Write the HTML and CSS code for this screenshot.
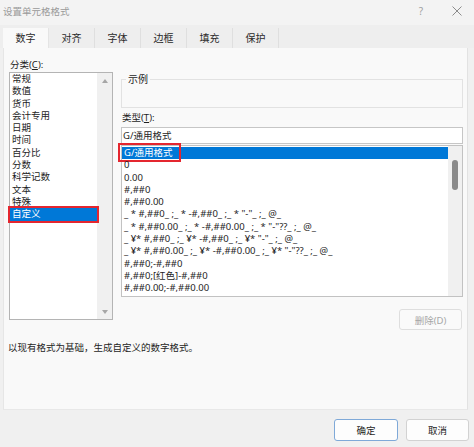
FILE: index.html
```html
<!DOCTYPE html>
<html lang="zh-CN">
<head>
<meta charset="utf-8">
<title>设置单元格格式</title>
<link rel="stylesheet" href="styles.css">
</head>
<body>
<div class="dialog">
  <div class="titlebar">
    <span class="title">设置单元格格式</span>
    <div class="title-btns">
      <span class="help">?</span>
      <svg class="close" width="10" height="10" viewBox="0 0 10 10"><path d="M0.5 0.5 L9.5 9.5 M9.5 0.5 L0.5 9.5" stroke="#8c8c8c" stroke-width="1" fill="none"/></svg>
    </div>
  </div>
  <div class="tabs">
    <div class="tab active">数字</div>
    <div class="tab">对齐</div>
    <div class="tab">字体</div>
    <div class="tab">边框</div>
    <div class="tab">填充</div>
    <div class="tab">保护</div>
  </div>
  <div class="panel">
    <div class="main">
      <div class="cat-col">
        <div class="label">分类(<u>C</u>):</div>
        <div class="listbox cat-list">
          <div class="items">
            <div class="item">常规</div>
            <div class="item">数值</div>
            <div class="item">货币</div>
            <div class="item">会计专用</div>
            <div class="item">日期</div>
            <div class="item">时间</div>
            <div class="item">百分比</div>
            <div class="item">分数</div>
            <div class="item">科学记数</div>
            <div class="item">文本</div>
            <div class="item">特殊</div>
            <div class="item selected marked">自定义</div>
          </div>
          <div class="vscroll arrows">
            <span class="arrow up"></span>
            <span class="arrow down"></span>
          </div>
        </div>
      </div>
      <div class="type-col">
        <fieldset class="sample"><legend>示例</legend></fieldset>
        <div class="label type-label">类型(<u>T</u>):</div>
        <div class="input">G/通用格式</div>
        <div class="listbox type-list">
          <div class="items">
            <div class="item selected"><span class="mark">G/通用格式</span></div>
            <div class="item">0</div>
            <div class="item">0.00</div>
            <div class="item">#,##0</div>
            <div class="item">#,##0.00</div>
            <div class="item">_ * #,##0_ ;_ * -#,##0_ ;_ * "-"_ ;_ @_</div>
            <div class="item">_ * #,##0.00_ ;_ * -#,##0.00_ ;_ * "-"??_ ;_ @_</div>
            <div class="item">_ ¥* #,##0_ ;_ ¥* -#,##0_ ;_ ¥* "-"_ ;_ @_</div>
            <div class="item">_ ¥* #,##0.00_ ;_ ¥* -#,##0.00_ ;_ ¥* "-"??_ ;_ @_</div>
            <div class="item">#,##0;-#,##0</div>
            <div class="item">#,##0;[红色]-#,##0</div>
            <div class="item">#,##0.00;-#,##0.00</div>
          </div>
          <div class="vscroll"><span class="thumb"></span></div>
        </div>
        <div class="del-row"><button class="btn disabled">删除(D)</button></div>
      </div>
    </div>
    <p class="desc">以现有格式为基础，生成自定义的数字格式。</p>
  </div>
  <div class="footer">
    <button class="btn default">确定</button>
    <button class="btn">取消</button>
  </div>
</div>
</body>
</html>
```
FILE: styles.css
```css
html, body {
  margin: 0;
  padding: 0;
}
body {
  width: 474px;
  height: 447px;
  overflow: hidden;
  background: #f0f0f0;
  font-family: "Noto Sans", "Noto Sans CJK SC", sans-serif;
  font-size: 9.5px;
  color: #1e1e1e;
}
.dialog {
  width: 474px;
  height: 447px;
  display: flex;
  flex-direction: column;
}
.titlebar {
  height: 25px;
  background: #f3f3f3;
  display: flex;
  align-items: center;
  justify-content: space-between;
  padding: 0 12px 4px 3px;
  box-sizing: border-box;
}
.title {
  color: #9a9a9a;
  font-size: 9.5px;
}
.title-btns {
  display: flex;
  align-items: center;
  gap: 29px;
}
.help {
  color: #a0a0a0;
  font-size: 10px;
}
.close {
  display: block;
}
.tabs {
  height: 23px;
  background: #eeeeee;
  display: flex;
  align-items: flex-end;
  padding-left: 3px;
}
.tab {
  width: 46px;
  height: 20px;
  line-height: 20px;
  text-align: center;
  font-size: 10px;
  color: #2a2a2a;
  border-right: 1px solid #dfdfdf;
  box-sizing: border-box;
}
.tab.active {
  background: #f9f9f9;
  border-right: 1px solid #e4e4e4;
}
.panel {
  margin-left: 3px;
  width: 465px;
  height: 362px;
  background: #f9f9f9;
  border-left: 1px solid #e6e6e6;
  border-right: 1px solid #e2e2e2;
  border-bottom: 1px solid #e8e8e8;
  box-sizing: border-box;
  padding: 9px 4px 0 5px;
}
.main {
  display: flex;
  gap: 8px;
  align-items: flex-start;
}
.cat-col {
  width: 104px;
  flex: none;
}
.label {
  line-height: 15px;
  height: 15px;
  padding-left: 1px;
}
.listbox {
  display: flex;
  background: #fff;
  border: 1px solid #b4b4b4;
  box-sizing: border-box;
}
.cat-list {
  height: 248px;
}
.items {
  flex: 1;
  min-width: 0;
}
.item {
  height: 12.3px;
  line-height: 12.3px;
  padding-left: 2px;
  white-space: nowrap;
}
.item.selected {
  background: #0078d7;
  color: #fff;
}
.item.marked {
  outline: 2px solid #e4262f;
  outline-offset: 0;
  position: relative;
}
.vscroll {
  width: 15px;
  flex: none;
  background: #f0f0f0;
  display: flex;
  flex-direction: column;
  align-items: center;
}
.arrows {
  justify-content: space-between;
  padding: 6px 0 5px;
  box-sizing: border-box;
}
.arrow {
  width: 0;
  height: 0;
  border-left: 3.5px solid transparent;
  border-right: 3.5px solid transparent;
}
.arrow.up {
  border-bottom: 4px solid #a6a6a6;
}
.arrow.down {
  border-top: 4px solid #a6a6a6;
}
.type-col {
  flex: 1;
  min-width: 0;
  padding-top: 15px;
}
.sample {
  margin: 0;
  padding: 0;
  min-width: 0;
  height: 36px;
  box-sizing: border-box;
  border: 1px solid #e2e2e2;
}
.sample legend {
  margin-left: 4px;
  padding: 0 2px;
  line-height: 14px;
  font-size: 10px;
}
.type-label {
  margin-top: 2px;
  margin-bottom: 2px;
}
.input {
  height: 17px;
  line-height: 15px;
  border: 1px solid #c6c6c6;
  background: #fff;
  box-sizing: border-box;
  padding-left: 1px;
}
.type-list {
  margin-top: 1px;
  height: 152px;
  border-color: #c2c2c2;
}
.type-list .items {
  padding-top: 1px;
}
.type-list .vscroll {
  width: 14px;
  align-items: center;
}
.thumb {
  display: block;
  width: 6px;
  height: 30px;
  margin-top: 14px;
  background: #8a8a8a;
  border-radius: 3px;
}
.mark {
  display: inline-block;
  padding: 2px 7px 1px 4px;
  margin: -2px -7px -1px -4px;
  line-height: 12.3px;
  outline: 2px solid #e4262f;
}
.del-row {
  display: flex;
  justify-content: flex-end;
  margin-top: 12px;
  padding-right: 1px;
}
.btn {
  font-family: "Noto Sans", "Noto Sans CJK SC", sans-serif;
  font-size: 9.5px;
  width: 63px;
  height: 21px;
  padding: 0;
  border: 1px solid #d2d2d2;
  border-radius: 3px;
  background: #fdfdfd;
  color: #1e1e1e;
}
.btn.disabled {
  color: #a6a6a6;
  border-color: #dedede;
  background: #fafafa;
}
.desc {
  margin: 11px 0 0 -1px;
  line-height: 14px;
}
.footer {
  flex: 1;
  display: flex;
  justify-content: flex-end;
  align-items: flex-start;
  gap: 8px;
  padding: 9px 5px 0 0;
  background: #f0f0f0;
}
.footer .btn {
  height: 22px;
}
.btn.default {
  width: 64px;
  border-color: #7fa9d8;
}
```
